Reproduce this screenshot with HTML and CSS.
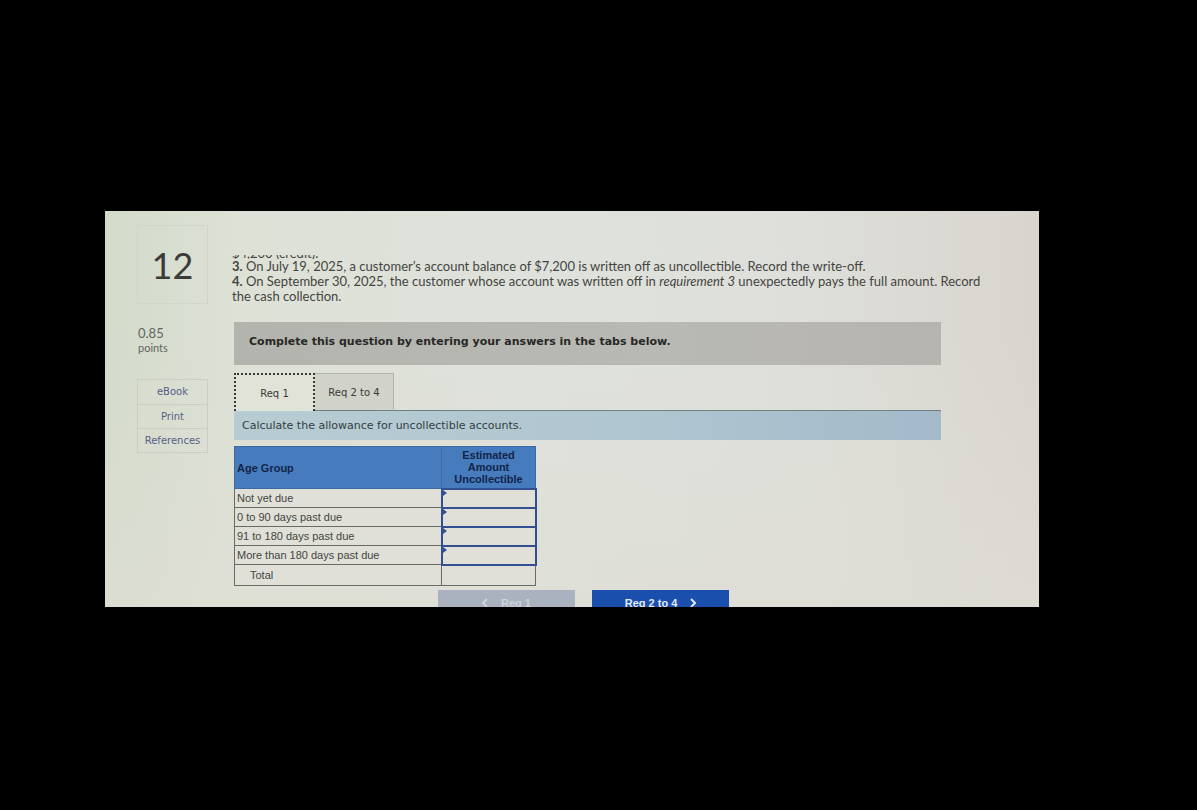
FILE: index.html
```html
<!DOCTYPE html>
<html lang="en">
<head>
    <meta charset="UTF-8">
    <meta name="viewport" content="width=device-width, initial-scale=1.0">
    <title>Question 12</title>
    <link rel="stylesheet" href="styles.css">
</head>
<body>
    <div class="screen">
        <aside class="sidebar">
            <div class="number">12</div>
            <div class="points"><span class="score">0.85</span><br>points</div>
            <nav class="links">
                <a href="#ebook">eBook</a>
                <a href="#print">Print</a>
                <a href="#references">References</a>
            </nav>
        </aside>

        <main class="question">
            <div class="cut-line"><span>$4,200 (credit).</span></div>
            <div class="text">
                <p><b>3.</b> On July 19, 2025, a customer’s account balance of $7,200 is written off as uncollectible. Record the write-off.</p>
                <p><b>4.</b> On September 30, 2025, the customer whose account was written off in <i>requirement 3</i> unexpectedly pays the full amount. Record the cash collection.</p>
            </div>

            <div class="answer">
                <div class="banner">Complete this question by entering your answers in the tabs below.</div>
                <div class="tabs">
                    <button type="button" class="tab active">Req 1</button>
                    <button type="button" class="tab">Req 2 to 4</button>
                    <div class="tab-line"></div>
                </div>
                <div class="instruction">Calculate the allowance for uncollectible accounts.</div>

                <table>
                    <thead>
                        <tr>
                            <th class="age">Age Group</th>
                            <th class="amount">Estimated Amount Uncollectible</th>
                        </tr>
                    </thead>
                    <tbody>
                        <tr>
                            <td><label for="due0">Not yet due</label></td>
                            <td class="entry"><input type="text" id="due0"></td>
                        </tr>
                        <tr>
                            <td><label for="due90">0 to 90 days past due</label></td>
                            <td class="entry"><input type="text" id="due90"></td>
                        </tr>
                        <tr>
                            <td><label for="due180">91 to 180 days past due</label></td>
                            <td class="entry"><input type="text" id="due180"></td>
                        </tr>
                        <tr>
                            <td><label for="dueover">More than 180 days past due</label></td>
                            <td class="entry"><input type="text" id="dueover"></td>
                        </tr>
                        <tr class="total">
                            <td>Total</td>
                            <td></td>
                        </tr>
                    </tbody>
                </table>

                <div class="pager">
                    <button type="button" class="prev" disabled>
                        <svg width="6" height="10" viewBox="0 0 6 10"><path d="M5 1 1 5l4 4"/></svg>
                        Req 1
                    </button>
                    <button type="button" class="next">
                        Req 2 to 4
                        <svg width="6" height="10" viewBox="0 0 6 10"><path d="m1 1 4 4-4 4"/></svg>
                    </button>
                </div>
            </div>
        </main>
    </div>
</body>
</html>
```
FILE: styles.css
```css
* {
    box-sizing: border-box;
}
body {
    margin: 0;
    background: #000;
    font-family: Lato, "Liberation Sans", sans-serif;
    color: #444541;
}
.screen {
    display: flex;
    margin: 211px 158px 203px 105px;
    padding-left: 32px;
    overflow: hidden;
    background:
        linear-gradient(to bottom, rgba(223, 222, 213, 0) 30%, rgba(223, 222, 213, 0.7)),
        linear-gradient(to right, #d2dbca 0%, #dde1d6 14%, #dfe2dc 45%, #dedfda 75%, #d9d4ce 100%);
}
.sidebar {
    width: 71px;
    margin-right: 24px;
    padding-top: 14px;
    flex-shrink: 0;
}
.number {
    height: 79px;
    border: 1px solid #d0d6c8;
    font-size: 36px;
    line-height: 78px;
    text-align: center;
    color: #3c3b38;
}
.points {
    margin-top: 22px;
    padding-left: 1px;
    font-size: 11px;
    line-height: 14px;
    color: #62655f;
}
.score {
    font-size: 13px;
}
.links {
    margin-top: 24px;
    border: 1px solid #cccec6;
}
.links a {
    display: block;
    height: 24px;
    font-family: "DejaVu Sans", sans-serif;
    font-size: 10px;
    line-height: 23px;
    text-align: center;
    text-decoration: none;
    color: #575e86;
}
.links a + a {
    border-top: 1px solid #cccec6;
}
.question {
    flex: 1;
    min-width: 0;
    padding-top: 44px;
}
/* tail of the paragraph scrolled out of view */
.cut-line {
    display: flex;
    align-items: flex-end;
    height: 4px;
    overflow: hidden;
    font-size: 13px;
    line-height: 11px;
}
.text {
    font-size: 13px;
    line-height: 15px;
    margin-right: 38px;
}
.text p {
    margin: 0;
}
.answer {
    margin: 18px 98px 0 2px;
}
.banner {
    height: 43px;
    padding-left: 15px;
    background: linear-gradient(to right, #b2b4ad, #b9b9b4 60%, #b6b4af);
    font: bold 11px/39px "DejaVu Sans", sans-serif;
    color: #282826;
}
.tabs {
    display: flex;
    align-items: flex-end;
    margin-top: 8px;
}
.tab {
    width: 79px;
    height: 38px;
    padding: 0;
    border: 1px solid #b3b4ac;
    border-left: 0;
    border-bottom-color: #70817f;
    background: #d1d2c9;
    font-family: "DejaVu Sans", sans-serif;
    font-size: 10px;
    color: #393a37;
}
.tab.active {
    width: 81px;
    border: 2px dotted #363a37;
    border-bottom: 0;
    background: #e1e3d9;
}
.tab-line {
    flex: 1;
    height: 1px;
    background: #70817f;
}
.instruction {
    height: 29px;
    padding-left: 8px;
    background: linear-gradient(to right, #b7ccd2, #afc5d0 60%, #a4b9ca);
    font: 11px/30px "DejaVu Sans", sans-serif;
    color: #333e42;
}
table {
    width: 301px;
    margin-top: 6px;
    border-collapse: collapse;
    table-layout: fixed;
    background: #e0e0d8;
    font: 11px/13px "Liberation Sans", Arial, sans-serif;
}
th {
    height: 42px;
    padding: 0 2px;
    border: 1px solid #3c6b9f;
    background: #467cbd;
    line-height: 12px;
    color: #132448;
}
.age {
    width: 207px;
    text-align: left;
}
.amount {
    width: 94px;
    padding: 0 8px;
}
td {
    height: 19px;
    padding: 0 2px;
    border: 1px solid #686b66;
}
td.entry {
    position: relative;
    padding: 0;
    border: 2px solid #344f91;
}
/* cell marker */
.entry::before {
    content: "";
    position: absolute;
    top: 0;
    left: 0;
    border-left: 4px solid #344f91;
    border-top: 3px solid transparent;
    border-bottom: 3px solid transparent;
}
.entry input {
    display: block;
    width: 100%;
    height: 17px;
    padding: 0 6px;
    border: 0;
    background: transparent;
    font: inherit;
}
.total td {
    height: 21px;
    padding-left: 15px;
}
/* only the top of the buttons shows above the edge */
.pager {
    display: flex;
    justify-content: center;
    gap: 17px;
    height: 17px;
    margin-top: 4px;
    margin-left: -8px;
    overflow: hidden;
}
.pager button {
    display: flex;
    align-items: center;
    justify-content: center;
    gap: 13px;
    width: 137px;
    height: 26px;
    padding: 0;
    border: 0;
    background: #1a4fae;
    font: bold 11px "Liberation Sans", Arial, sans-serif;
    color: #e4eaf2;
}
.pager .prev {
    background: #a9b2be;
    color: #ced4da;
}
.pager svg {
    fill: none;
    stroke: currentColor;
    stroke-width: 2;
}
```
